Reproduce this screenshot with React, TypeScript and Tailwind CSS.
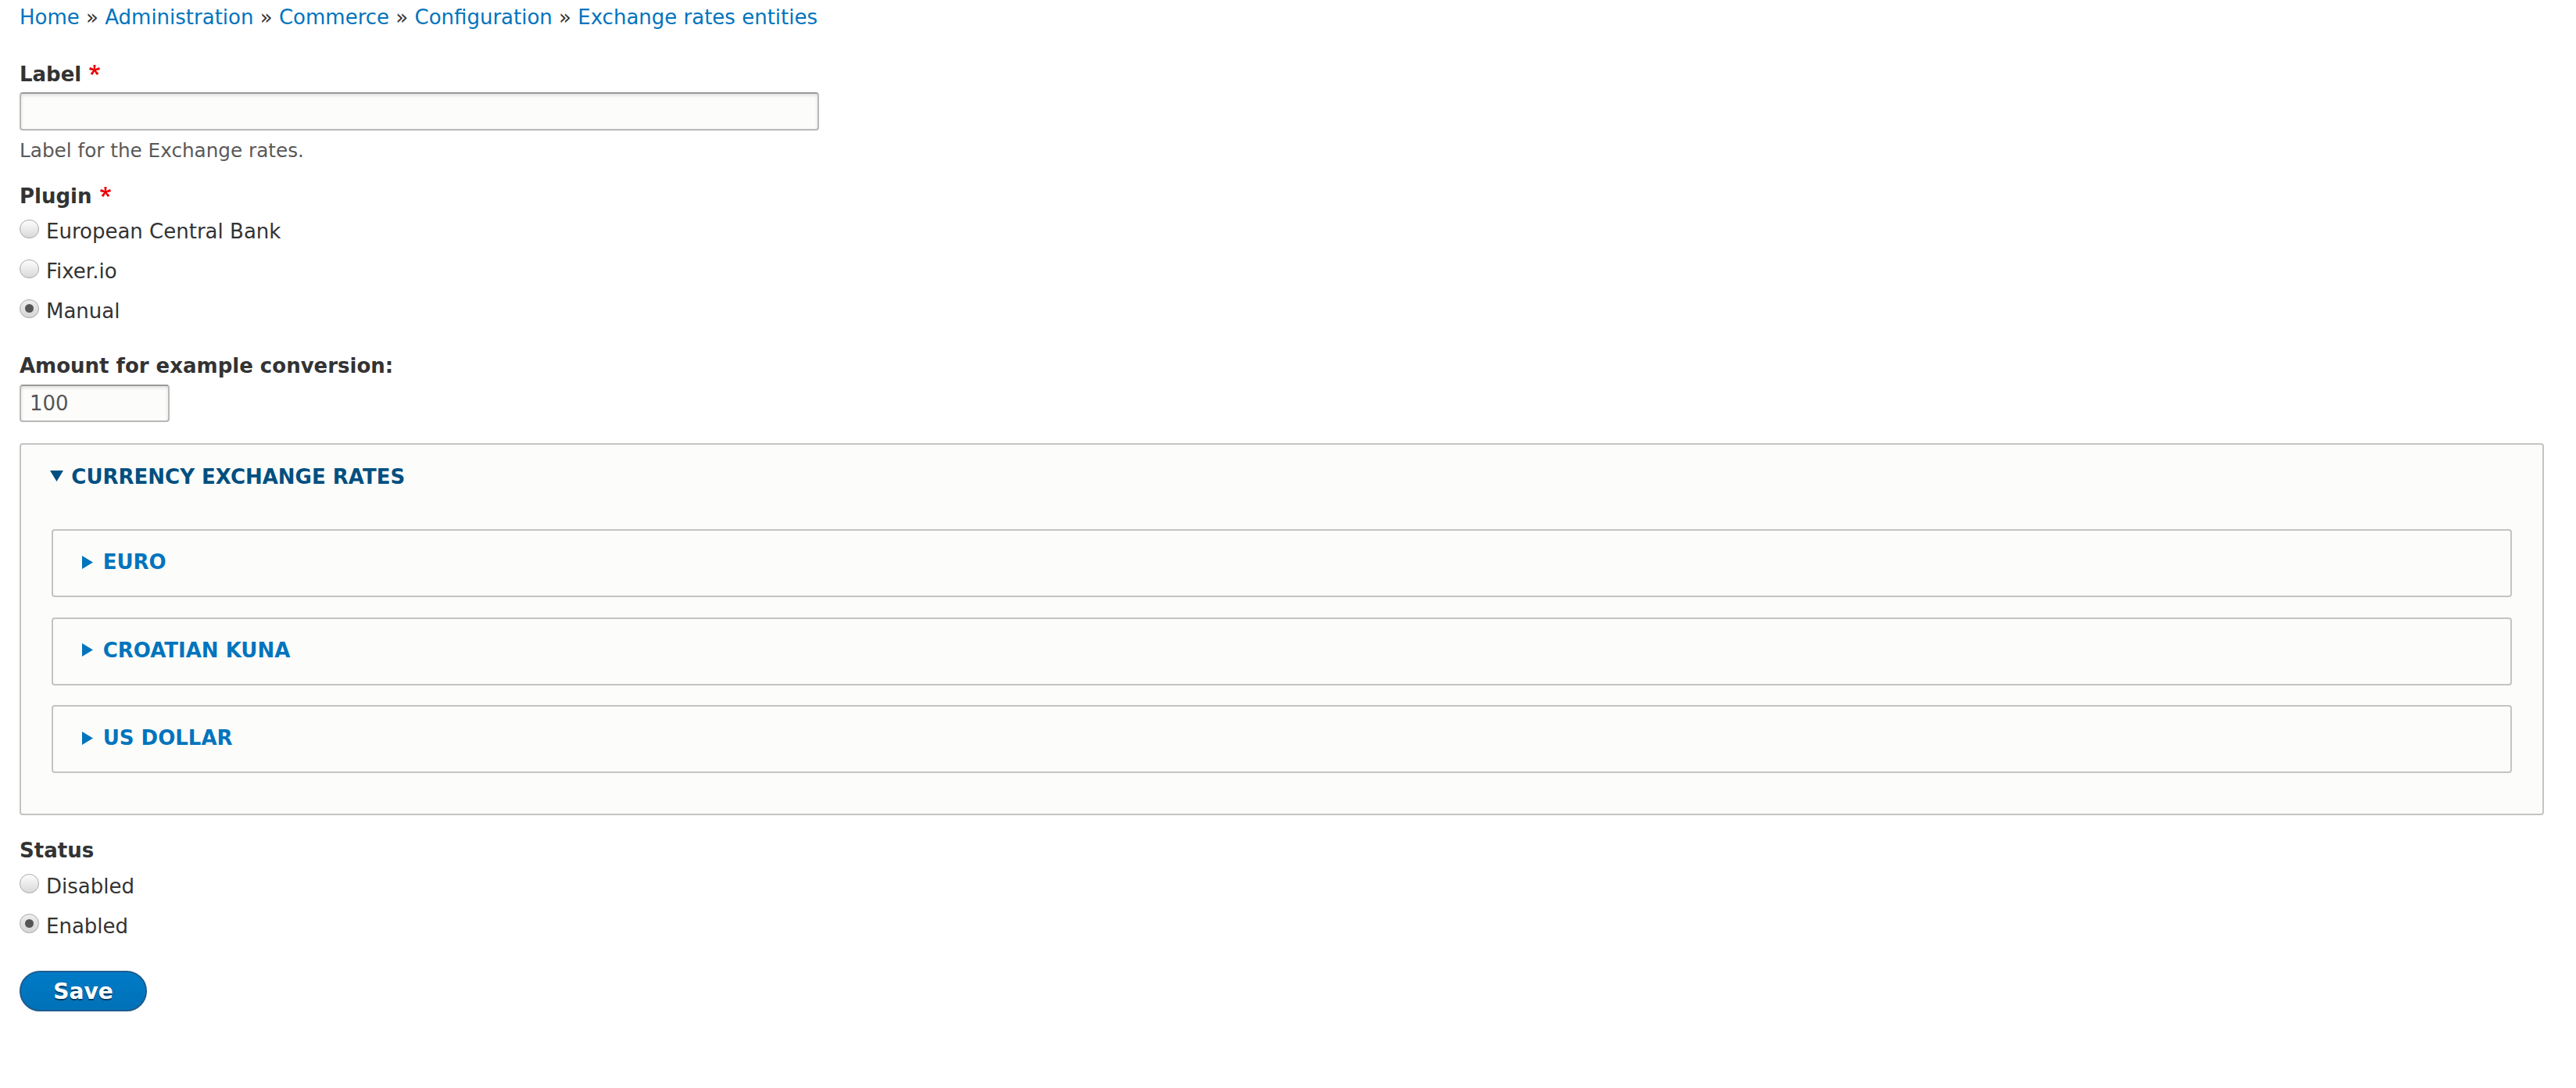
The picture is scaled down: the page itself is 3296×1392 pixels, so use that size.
import React from 'react';

const crumbs = ['Home', 'Administration', 'Commerce', 'Configuration', 'Exchange rates entities'];

const Required: React.FC = () => (
  <svg
    className="ml-[10px] mt-[6px] h-[15px] w-[14px] shrink-0"
    viewBox="0 0 16 16"
    aria-hidden="true"
  >
    <path
      fill="#ee0000"
      d="M0 7.562l1.114-3.438c2.565.906 4.43 1.688 5.59 2.35C6.398 3.553 6.237 1.544 6.22.447h3.511c-.05 1.597-.234 3.6-.558 6.003 1.664-.838 3.566-1.613 5.714-2.325L16 7.562c-2.05.678-4.06 1.131-6.028 1.356.984.856 2.372 2.381 4.166 4.575l-2.906 2.059c-.935-1.274-2.041-3.009-3.316-5.206-1.194 2.275-2.244 4.013-3.147 5.206l-2.856-2.059c1.872-2.307 3.211-3.832 4.017-4.575C3.849 8.516 1.884 8.062 0 7.562"
    />
  </svg>
);

interface RadioProps {
  label: string;
  checked?: boolean;
  first?: boolean;
}

const Radio: React.FC<RadioProps> = ({ label, checked, first }) => (
  <div className={`flex items-start leading-[40px] ${first ? 'mt-[5.5px]' : 'mt-[11px]'}`}>
    <span
      className={`mt-[4.5px] mr-[9.5px] flex h-[24.5px] w-[24.5px] shrink-0 items-center justify-center rounded-full border-[1.5px] border-[#a9a9a9] bg-linear-to-b ${
        checked ? 'from-[#ededed] to-[#d6d6d6]' : 'from-[#fdfdfd] to-[#d9d9d9]'
      }`}
    >
      {checked && <span className="h-[11px] w-[11px] rounded-full bg-[#555]" />}
    </span>
    <span>{label}</span>
  </div>
);

const Triangle: React.FC<{ open?: boolean; className: string }> = ({ open, className }) =>
  open ? (
    <svg className={`shrink-0 ${className}`} width="17" height="14" viewBox="0 0 17 14" aria-hidden="true">
      <path d="M0 0h17L8.5 14z" fill="currentColor" />
    </svg>
  ) : (
    <svg className={`shrink-0 ${className}`} width="14" height="17" viewBox="0 0 14 17" aria-hidden="true">
      <path d="M0 0l14 8.5L0 17z" fill="currentColor" />
    </svg>
  );

const CurrencyDetails: React.FC<{ name: string }> = ({ name }) => (
  <div className="h-[87px] rounded-[4px] border-2 border-[#c4c4c4] bg-[#fcfcfa]">
    <div className="flex items-start pt-[21px] pl-[37px] font-bold uppercase text-[#0074bd]">
      <Triangle className="mt-[10.7px] mr-[12.7px]" />
      <span>{name}</span>
    </div>
  </div>
);

export default function App() {
  return (
    <div className="min-h-screen bg-white pt-[3px] pr-[41px] pl-[25px] font-['DejaVu_Sans',sans-serif] text-[26px] leading-[39px] text-[#333]">
      <nav className="flex flex-wrap whitespace-pre">
        {crumbs.map((crumb, index) => (
          <React.Fragment key={crumb}>
            <a href="#" className="text-[#0074bd]">
              {crumb}
            </a>
            {index < crumbs.length - 1 && <span> » </span>}
          </React.Fragment>
        ))}
      </nav>

      <div className="mt-[34px] flex items-start font-bold">
        Label
        <Required />
      </div>
      <input
        type="text"
        className="mt-[3px] block h-[49px] w-[1023px] rounded-[4px] border-2 border-[#b8b8b8] border-t-[#999] bg-[#fcfcfa] px-[11px] shadow-[inset_0_2px_4px_rgba(0,0,0,0.125)] outline-none"
      />
      <div className="mt-[7px] text-[24.7px] leading-[37px] text-[#595959]">Label for the Exchange rates.</div>

      <div className="mt-[20.5px] flex items-start font-bold">
        Plugin
        <Required />
      </div>
      <Radio label="European Central Bank" first />
      <Radio label="Fixer.io" />
      <Radio label="Manual" checked />

      <div className="mt-[31px] font-bold">Amount for example conversion:</div>
      <input
        type="text"
        defaultValue="100"
        className="mt-[4px] block h-[48px] w-[192px] rounded-[4px] border-2 border-[#b8b8b8] border-t-[#999] bg-[#fcfcfa] px-[11px] text-[#555] shadow-[inset_0_2px_4px_rgba(0,0,0,0.125)] outline-none"
      />

      <div className="mt-[27px] rounded-[4px] border-2 border-[#c4c4c4] bg-[#fcfcfa]">
        <div className="flex items-start pt-[21.5px] pl-[37px] font-bold uppercase text-[#004f80]">
          <Triangle open className="mt-[11.5px] mr-[10.3px]" />
          <span>Currency exchange rates</span>
        </div>
        <div className="flex flex-col gap-[25.5px] px-[39px] pt-[47.5px] pb-[52px]">
          <CurrencyDetails name="Euro" />
          <CurrencyDetails name="Croatian Kuna" />
          <CurrencyDetails name="US Dollar" />
        </div>
      </div>

      <div className="mt-[26px] font-bold">Status</div>
      <Radio label="Disabled" first />
      <Radio label="Enabled" checked />

      <button
        type="button"
        className="mt-[37.5px] mb-[60px] h-[52px] w-[163px] rounded-full border-2 border-[#1e5c90] bg-linear-to-b from-[#007bc6] to-[#0071b8] pt-[1px] text-[28px] font-bold text-white [text-shadow:0_2px_0_rgba(0,0,0,0.5)]"
      >
        Save
      </button>
    </div>
  );
}
